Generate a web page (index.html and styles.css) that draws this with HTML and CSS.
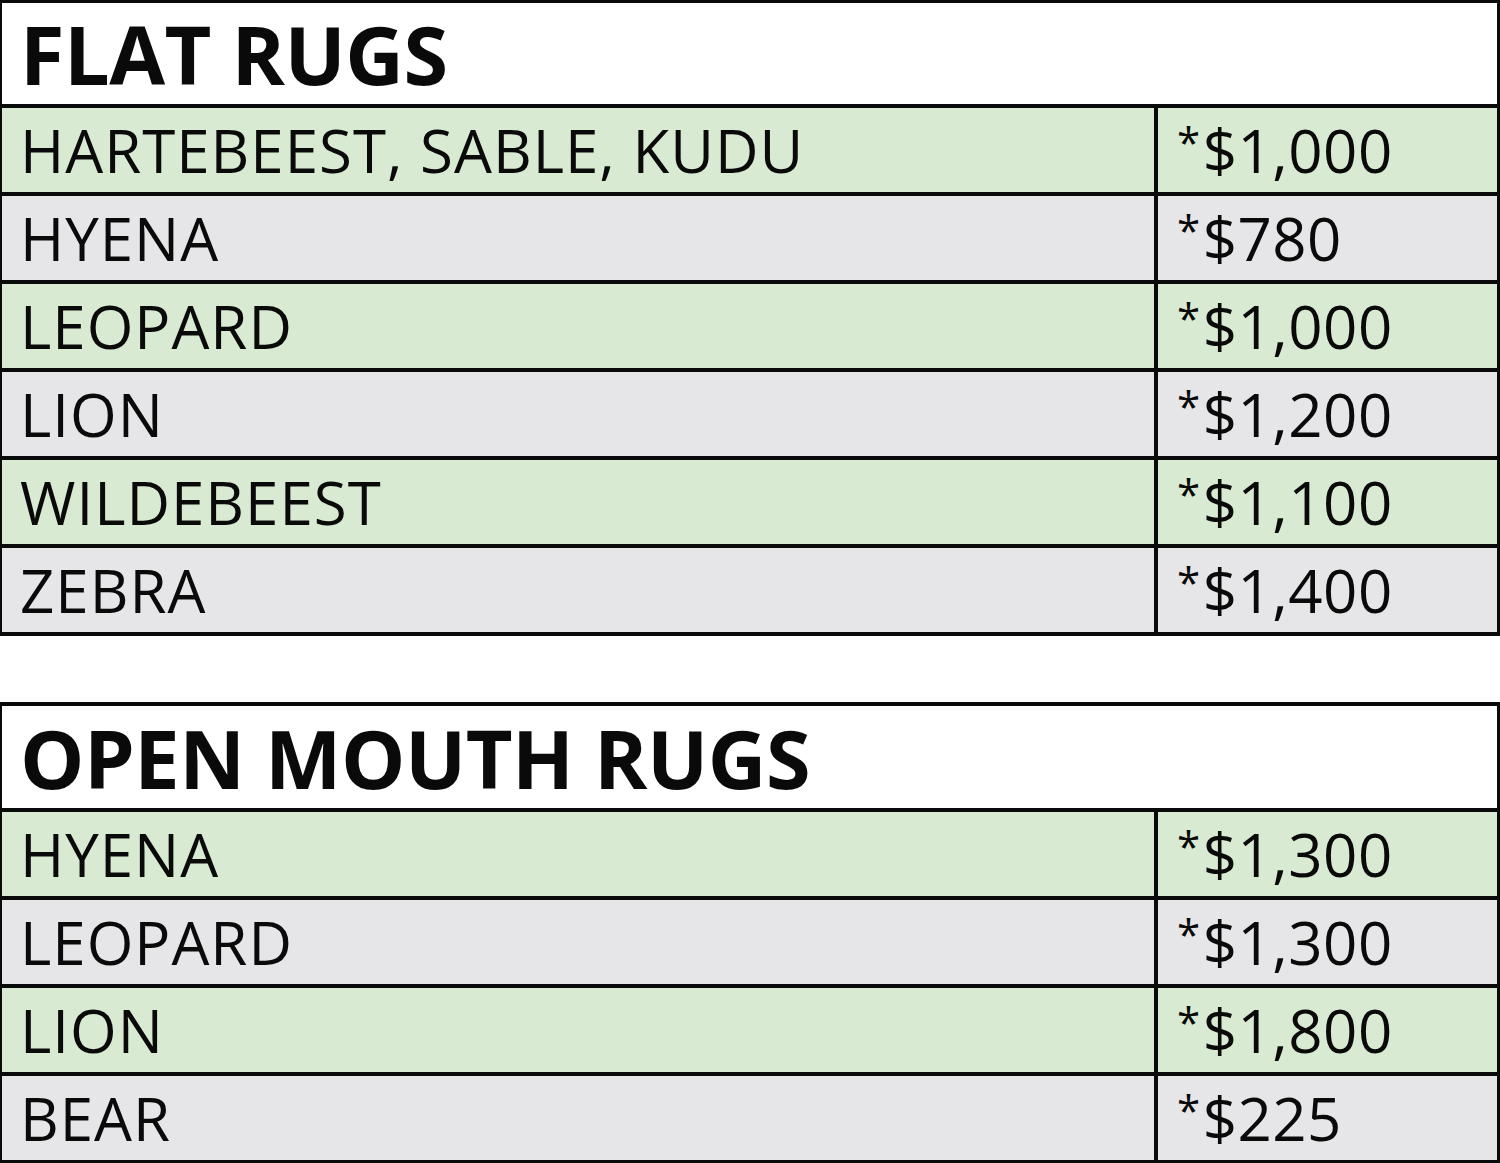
FILE: index.html
```html
<!DOCTYPE html>
<html>
<head>
<meta charset="utf-8">
<link rel="stylesheet" href="styles.css">
</head>
<body>
<div class="page">
  <div class="sheet first">
    <div class="head">FLAT RUGS</div>
    <div class="cell green">HARTEBEEST, SABLE, KUDU</div><div class="cell green price"><span class="star">*</span>$1,000</div>
    <div class="cell gray">HYENA</div><div class="cell gray price"><span class="star">*</span>$780</div>
    <div class="cell green">LEOPARD</div><div class="cell green price"><span class="star">*</span>$1,000</div>
    <div class="cell gray">LION</div><div class="cell gray price"><span class="star">*</span>$1,200</div>
    <div class="cell green">WILDEBEEST</div><div class="cell green price"><span class="star">*</span>$1,100</div>
    <div class="cell gray">ZEBRA</div><div class="cell gray price"><span class="star">*</span>$1,400</div>
  </div>
  <div class="sheet second">
    <div class="head">OPEN MOUTH RUGS</div>
    <div class="cell green">HYENA</div><div class="cell green price"><span class="star">*</span>$1,300</div>
    <div class="cell gray">LEOPARD</div><div class="cell gray price"><span class="star">*</span>$1,300</div>
    <div class="cell green">LION</div><div class="cell green price"><span class="star">*</span>$1,800</div>
    <div class="cell gray">BEAR</div><div class="cell gray price"><span class="star">*</span>$225</div>
  </div>
</div>
</body>
</html>
```

FILE: styles.css
```css
html, body {
  margin: 0;
  padding: 0;
  background: #ffffff;
}
.page {
  width: 1500px;
  display: flex;
  flex-direction: column;
  gap: 66px;
  font-family: "Open Sans", "Noto Sans", sans-serif;
  color: #0a0a0a;
}
.sheet {
  display: grid;
  grid-template-columns: 1152px 339px;
  column-gap: 4px;
  row-gap: 4px;
  background: #0a0a0a;
  padding: 3px 3px 4px 2px;
}
.sheet.second {
  padding: 4px 3px 3px 2px;
}
.head {
  grid-column: 1 / span 2;
  background: #ffffff;
  height: 101px;
  display: flex;
  align-items: center;
  padding-left: 18px;
  font-weight: 700;
  font-size: 81px;
  letter-spacing: -0.5px;
}
.second .head {
  height: 102px;
}
.cell {
  height: 84px;
  display: flex;
  align-items: center;
  padding-left: 18px;
  font-size: 60px;
  line-height: 1;
  letter-spacing: 1px;
}
.cell.price {
  padding-left: 19px;
  letter-spacing: 0.5px;
}
.star {
  font-size: 42px;
  align-self: center;
  position: relative;
  top: -8px;
  margin-right: 2px;
}
.green {
  background: #d9ead3;
}
.gray {
  background: #e6e6e8;
}
```
